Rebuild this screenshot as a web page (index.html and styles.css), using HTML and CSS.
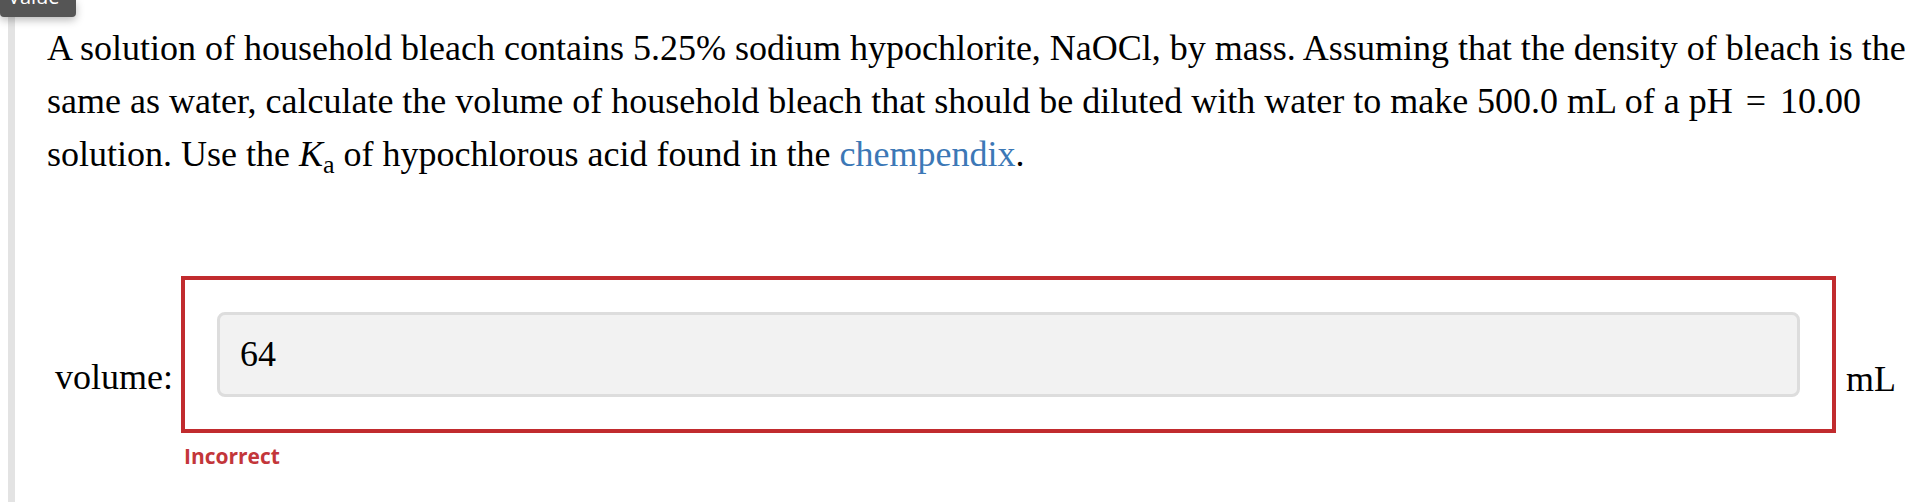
FILE: index.html
```html
<!DOCTYPE html>
<html>
<head>
<meta charset="utf-8">
<link rel="stylesheet" href="styles.css">
</head>
<body>
<div class="tab"><span>Value</span></div>
<div class="frame">
  <p class="question">A solution of household bleach contains 5.25% sodium hypochlorite, NaOCl, by mass. Assuming that the density of bleach is the same as water, calculate the volume of household bleach that should be diluted with water to make 500.0 mL of a pH<span class="eq">=</span>10.00 solution. Use the <i class="k">K</i><sub class="sub">a</sub> of hypochlorous acid found in the <a class="link" href="#">chempendix</a>.</p>
  <div class="answer-row">
    <span class="label">volume:</span>
    <div class="answer-col">
      <div class="answer-box">
        <div class="field">64</div>
      </div>
      <div class="feedback">Incorrect</div>
    </div>
    <span class="unit">mL</span>
  </div>
</div>
</body>
</html>
```
FILE: styles.css
```css
html, body {
  margin: 0;
  padding: 0;
  background: #ffffff;
}
body {
  font-family: "Liberation Serif", "Times New Roman", serif;
  color: #000;
  height: 502px;
  overflow: hidden;
  position: relative;
}
.tab {
  position: absolute;
  top: 0;
  left: 0;
  width: 76px;
  height: 17px;
  background: #555555;
  border-radius: 0 0 4px 4px;
  box-shadow: 0 3px 8px rgba(0,0,0,0.28);
  overflow: hidden;
  z-index: 2;
}
.tab span {
  display: block;
  margin-top: -15px;
  padding-left: 8px;
  font-family: "Open Sans", "Liberation Sans", sans-serif;
  font-size: 20px;
  line-height: 24px;
  color: #ffffff;
}
.frame {
  margin-left: 8px;
  border-left: 7px solid #e3e3e3;
  padding: 22px 0 0 32px;
  height: 480px;
}
.question {
  margin: 0;
  font-size: 36px;
  line-height: 53px;
  padding-right: 10px;
}
.eq {
  margin: 0 14px 0 13px;
}
.k {
  font-style: italic;
}
.sub {
  font-size: 26px;
  vertical-align: -7px;
  line-height: 0;
}
.link {
  color: #3c78b6;
  text-decoration: none;
}
.answer-row {
  display: flex;
  align-items: flex-start;
  margin-top: 95px;
  padding-left: 8px;
  margin-right: 28px;
}
.label {
  font-size: 36px;
  line-height: 53px;
  margin-top: 75px;
  margin-right: 8px;
}
.answer-col {
  flex: 1;
  display: flex;
  flex-direction: column;
}
.answer-box {
  border: 4px solid #c12b2e;
  padding: 32px;
}
.field {
  height: 79px;
  border: 3.5px solid #dddddd;
  border-radius: 8px;
  background: #f2f2f2;
  padding-left: 20px;
  font-size: 36px;
  line-height: 79px;
}
.feedback {
  margin-top: 9px;
  margin-left: 3px;
  font-family: "Open Sans", "Liberation Sans", sans-serif;
  font-weight: 700;
  font-size: 21px;
  line-height: 28px;
  color: #c3363a;
}
.unit {
  font-size: 36px;
  line-height: 53px;
  margin-top: 77px;
  margin-left: 10px;
}
```
